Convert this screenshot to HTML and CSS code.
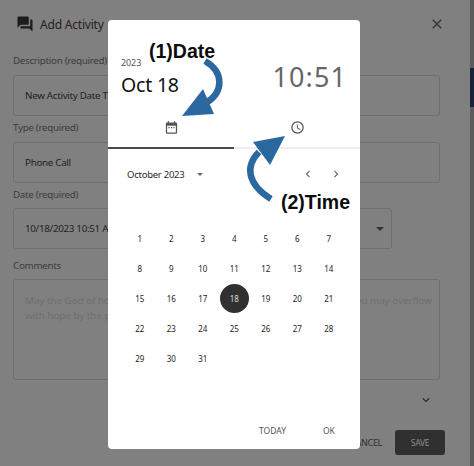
FILE: index.html
```html
<!DOCTYPE html>
<html lang="en">
<head>
<meta charset="utf-8">
<title>Add Activity</title>
<link rel="stylesheet" href="styles.css">
</head>
<body>
<main class="sheet">
  <header class="sheet-head">
    <svg class="head-icon" viewBox="0 0 24 24" width="18" height="18"><path d="M21 6h-2v9H6v2c0 .55.45 1 1 1h11l4 4V7c0-.55-.45-1-1-1zm-4 6V3c0-.55-.45-1-1-1H3c-.55 0-1 .45-1 1v14l4-4h10c.55 0 1-.45 1-1z"/></svg>
    <h1 class="head-title">Add Activity</h1>
    <svg class="head-close" viewBox="0 0 24 24" width="16" height="16"><path d="M19 6.41 17.59 5 12 10.59 6.41 5 5 6.41 10.59 12 5 17.59 6.41 19 12 13.41 17.59 19 19 17.59 13.41 12z"/></svg>
  </header>
  <label class="field-label">Description (required)</label>
  <div class="box box-wide">New Activity Date Time</div>
  <label class="field-label">Type (required)</label>
  <div class="box box-wide">Phone Call</div>
  <label class="field-label">Date (required)</label>
  <div class="box box-date">10/18/2023 10:51 AM<span class="caret"></span></div>
  <label class="field-label label-comments">Comments</label>
  <div class="box box-area">May the God of hope fill you with all joy and peace in believing, so that you may overflow<br>with hope by the power of the Holy Spirit.</div>
  <div class="chevron-row">
    <svg viewBox="0 0 24 24" width="14" height="14"><path d="M7.41 8.59 12 13.17l4.59-4.58L18 10l-6 6-6-6z"/></svg>
  </div>
  <div class="actions">
    <span class="btn-cancel">CANCEL</span>
    <span class="btn-save">SAVE</span>
  </div>
</main>
<div class="edge"><span class="edge-navy"></span></div>

<section class="picker">
  <div class="picker-head">
    <div class="picker-date">
      <div class="picker-year">2023</div>
      <div class="picker-day">Oct 18</div>
    </div>
    <div class="picker-time">10:51</div>
  </div>
  <div class="tabs">
    <div class="tab tab-active">
      <svg viewBox="0 0 24 24" width="15" height="15"><path d="M19 4h-1V2h-2v2H8V2H6v2H5a2 2 0 0 0-2 2v14a2 2 0 0 0 2 2h14a2 2 0 0 0 2-2V6a2 2 0 0 0-2-2zm0 16H5V9h14v11zM7 11h2v2H7zm4 0h2v2h-2zm4 0h2v2h-2z"/></svg>
    </div>
    <div class="tab">
      <svg viewBox="0 0 24 24" width="15" height="15"><path d="M12 2a10 10 0 1 0 0 20 10 10 0 0 0 0-20zm0 18a8 8 0 1 1 0-16 8 8 0 0 1 0 16zm.5-13H11v6l5.25 3.15.75-1.23-4.5-2.67z"/></svg>
    </div>
  </div>
  <div class="month-row">
    <span class="month-name">October 2023</span>
    <span class="month-caret"></span>
    <span class="month-nav">
      <svg viewBox="0 0 24 24" width="14" height="14"><path d="M15.41 7.41 14 6l-6 6 6 6 1.41-1.41L10.83 12z"/></svg>
      <svg viewBox="0 0 24 24" width="14" height="14"><path d="M8.59 16.59 10 18l6-6-6-6-1.41 1.41L13.17 12z"/></svg>
    </span>
  </div>
  <div class="days">
    <span>1</span><span>2</span><span>3</span><span>4</span><span>5</span><span>6</span><span>7</span>
    <span>8</span><span>9</span><span>10</span><span>11</span><span>12</span><span>13</span><span>14</span>
    <span>15</span><span>16</span><span>17</span><span class="day-on">18</span><span>19</span><span>20</span><span>21</span>
    <span>22</span><span>23</span><span>24</span><span>25</span><span>26</span><span>27</span><span>28</span>
    <span>29</span><span>30</span><span>31</span>
  </div>
  <div class="picker-actions">
    <span class="act-today">TODAY</span>
    <span class="act-ok">OK</span>
  </div>
</section>

<div class="note note-date">(1)Date</div>
<div class="note note-time">(2)Time</div>
<svg class="arrows" viewBox="0 0 474 466" width="474" height="466">
  <path class="arrow-line" d="M205 61C224 72 224 92 206 103"/>
  <path class="arrow-head" d="M182 116L203 89L214 114Z"/>
  <path class="arrow-line" d="M271 199C247 184 245 166 259 152"/>
  <path class="arrow-head" d="M253 142L285 136L270 165Z"/>
</svg>
</body>
</html>
```
FILE: styles.css
```css
* { box-sizing: border-box; }
html, body { margin: 0; padding: 0; }
body {
  position: relative;
  width: 474px;
  height: 466px;
  overflow: hidden;
  background: #808080;
  font-family: "Noto Sans", sans-serif;
}
.sheet {
  width: 470px;
  height: 466px;
  padding: 14px 34px 0 13px;
  color: #2a2a2a;
  font-size: 9.8px;
  letter-spacing: -0.3px;
}
.sheet-head {
  display: flex;
  align-items: center;
  height: 20px;
  margin-bottom: 20px;
}
.head-icon { margin-left: 3px; fill: #1c1c1c; }
.head-title {
  margin: 0 0 0 6px;
  font-size: 12px;
  font-weight: 400;
  letter-spacing: -0.2px;
  color: #222;
}
.head-close { margin-left: auto; margin-right: -9px; fill: #333; }
.field-label {
  display: block;
  height: 14px;
  color: #3c3c3c;
  line-height: 14px;
}
.box {
  display: flex;
  align-items: center;
  border: 1px solid #6f6f6f;
  border-radius: 3px;
  padding: 0 11px;
  white-space: nowrap;
}
.box-wide { width: 427px; height: 41px; margin-top: 7px; margin-bottom: 5px; color: #222; }
.box-date { position: relative; width: 379px; height: 41px; margin-top: 6px; color: #222; }
.caret {
  position: absolute;
  right: 7px;
  top: 18px;
  border: 4px solid transparent;
  border-top-color: #333;
}
.label-comments { margin-top: 10px; }
.box-area {
  display: block;
  width: 427px;
  height: 101px;
  margin-top: 6px;
  padding-top: 13px;
  font-size: 9.8px;
  letter-spacing: 0;
  color: #6f6f6f;
  line-height: 15px;
}
.chevron-row {
  display: flex;
  justify-content: flex-end;
  margin-top: 13px;
  fill: #222;
}
.chevron-row svg { margin-right: 3px; }
.actions {
  display: flex;
  align-items: center;
  justify-content: flex-end;
  gap: 13px;
  margin-top: 23px;
  font-size: 9px;
}
.btn-cancel { color: #2f2f2f; }
.btn-save {
  display: flex;
  align-items: center;
  justify-content: center;
  width: 50px;
  height: 25px;
  margin-right: -9px;
  border-radius: 3px;
  background: #303030;
  font-size: 8.5px;
  color: #8c8c8c;
}
.edge {
  position: absolute;
  right: 0;
  top: 0;
  width: 4px;
  height: 466px;
  background: #5c5c5c;
}
.edge-navy {
  position: absolute;
  top: 68px;
  left: 0;
  width: 4px;
  height: 39px;
  background: #16233b;
}
.picker {
  position: absolute;
  left: 108px;
  top: 20px;
  display: flex;
  flex-direction: column;
  width: 252px;
  height: 429px;
  border-radius: 4px;
  background: #fff;
  color: #1f1f1f;
}
.picker-head {
  display: flex;
  justify-content: space-between;
  height: 88px;
  padding: 35px 13px 0 13px;
}
.picker-year { font-size: 9px; line-height: 15px; letter-spacing: -0.1px; color: #555; }
.picker-day { margin-top: 1px; font-size: 19.5px; line-height: 28px; letter-spacing: -0.2px; color: #111; }
.picker-time {
  margin-top: 3px;
  font-size: 27px;
  line-height: 38px;
  letter-spacing: 1.1px;
  color: #666;
}
.tabs { display: flex; height: 41px; border-bottom: 2px solid #eee; }
.tab {
  display: flex;
  flex: 1;
  justify-content: center;
  padding-top: 12px;
  margin-bottom: -2px;
  fill: #555;
}
.tab-active { flex: 0 0 126px; border-bottom: 2px solid #4a4a4a; }
.month-row {
  display: flex;
  align-items: center;
  height: 50px;
  padding: 0 17px 0 19px;
  font-size: 9.5px;
  letter-spacing: -0.25px;
  color: #2a2a2a;
}
.month-caret {
  margin: 1px 0 0 12px;
  border: 3.5px solid transparent;
  border-top-color: #666;
  border-bottom-width: 0;
}
.month-nav { display: flex; gap: 14px; margin-left: auto; fill: #666; }
.days {
  display: grid;
  grid-template-columns: repeat(7, 31.5px);
  grid-auto-rows: 30px;
  align-items: center;
  justify-items: center;
  height: 217px;
  padding: 24px 0 0 16px;
  font-size: 8px;
  color: #222;
}
.days span {
  display: flex;
  align-items: center;
  justify-content: center;
  width: 29px;
  height: 29px;
}
.days .day-on { border-radius: 50%; background: #303030; color: #ddd; }
.picker-actions {
  display: flex;
  align-items: center;
  height: 29px;
  font-size: 8.5px;
  color: #555;
}
.act-today { margin-left: 151px; }
.act-ok { margin-left: 37px; }
.note {
  position: absolute;
  font-family: "Liberation Sans", sans-serif;
  font-size: 19.5px;
  font-weight: 700;
  line-height: 24px;
  color: #0c0c0c;
}
.note-date { left: 149px; top: 39px; }
.note-time { left: 281px; top: 190px; }
.arrows { position: absolute; left: 0; top: 0; }
.arrow-line { fill: none; stroke: #2b689f; stroke-width: 6.5; }
.arrow-head { fill: #2b689f; }
```
